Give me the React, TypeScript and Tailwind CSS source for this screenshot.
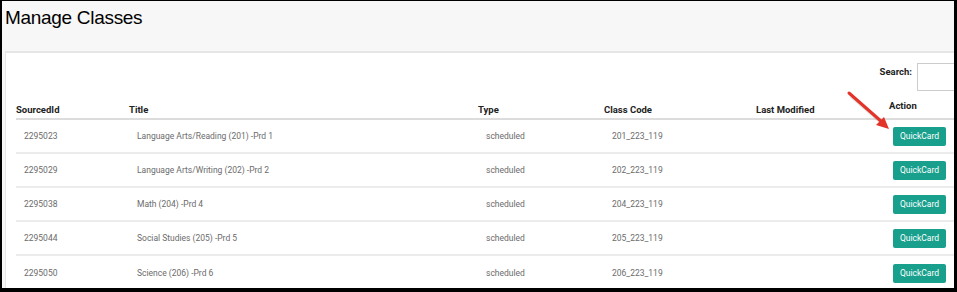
import React from 'react';

interface ClassRow {
  sourcedId: string;
  title: string;
  type: string;
  classCode: string;
  lastModified: string;
}

const rows: ClassRow[] = [
  { sourcedId: '2295023', title: 'Language Arts/Reading (201) -Prd 1', type: 'scheduled', classCode: '201_223_119', lastModified: '' },
  { sourcedId: '2295029', title: 'Language Arts/Writing (202) -Prd 2', type: 'scheduled', classCode: '202_223_119', lastModified: '' },
  { sourcedId: '2295038', title: 'Math (204) -Prd 4', type: 'scheduled', classCode: '204_223_119', lastModified: '' },
  { sourcedId: '2295044', title: 'Social Studies (205) -Prd 5', type: 'scheduled', classCode: '205_223_119', lastModified: '' },
  { sourcedId: '2295050', title: 'Science (206) -Prd 6', type: 'scheduled', classCode: '206_223_119', lastModified: '' },
];

const cols = 'grid grid-cols-[113px_349px_126px_152px_133px_1fr]';

export default function App() {
  return (
    <div className="w-[957px] h-[292px] bg-black overflow-hidden">
      <div className="relative ml-[2px] mt-[1px] w-[952px] h-[287px] bg-[#f7f7f7] flex flex-col overflow-hidden">
        <div className="h-[50px] shrink-0 pl-[3px] pt-[4px]">
          <h1 className="text-[19px] leading-[26px] text-black tracking-[-0.3px] font-['Liberation_Sans',Arial,sans-serif]">
            Manage Classes
          </h1>
        </div>

        <div className="flex-1 ml-[3px] bg-white border-t-2 border-l border-[#e6e6e6] font-['Roboto','Liberation_Sans',sans-serif]">
          <div className="flex justify-end items-start pt-[10px] h-[40px]">
            <span className="text-[9.5px] font-bold text-[#222] mr-[5px] mt-[2px]">Search:</span>
            <div className="w-[37px] h-[28px] border border-[#ccc] border-r-0 bg-white" />
          </div>

          <div className="pl-[10px]">
            <div className={`${cols} h-[27px] items-end pb-[1px] border-b-2 border-[#dcdcdc] text-[9.5px] font-bold text-[#222]`}>
              <div>SourcedId</div>
              <div>Title</div>
              <div>Type</div>
              <div>Class Code</div>
              <div>Last Modified</div>
              <div className="mb-[4px]">Action</div>
            </div>

            {rows.map((row, i) => (
              <div
                key={row.sourcedId}
                className={`${cols} h-[34px] items-center text-[8.5px] text-[#6b6b6b] ${i < rows.length - 1 ? 'border-b-2 border-[#ececec]' : ''}`}
              >
                <div className="pl-[8px]">{row.sourcedId}</div>
                <div className="pl-[8px]">{row.title}</div>
                <div className="pl-[8px]">{row.type}</div>
                <div className="pl-[8px]">{row.classCode}</div>
                <div className="pl-[8px]">{row.lastModified}</div>
                <div className="pl-[4px]">
                  <button className="w-[53px] h-[19px] rounded-[2px] bg-[#18a08c] text-white text-[8.5px] leading-none">
                    QuickCard
                  </button>
                </div>
              </div>
            ))}
          </div>
        </div>

        {/* red pointer arrow */}
        <svg className="absolute left-[840px] top-[86px]" width="52" height="48" viewBox="0 0 52 48">
          <line x1="8" y1="7" x2="41" y2="36" stroke="#9a9a9a" strokeOpacity="0.35" strokeWidth="3" transform="translate(1 2)" />
          <line x1="7" y1="6" x2="40" y2="35" stroke="#e3342a" strokeWidth="3" strokeLinecap="round" />
          <polygon points="47,42 34,38 42,30" fill="#e3342a" />
        </svg>
      </div>
    </div>
  );
}
